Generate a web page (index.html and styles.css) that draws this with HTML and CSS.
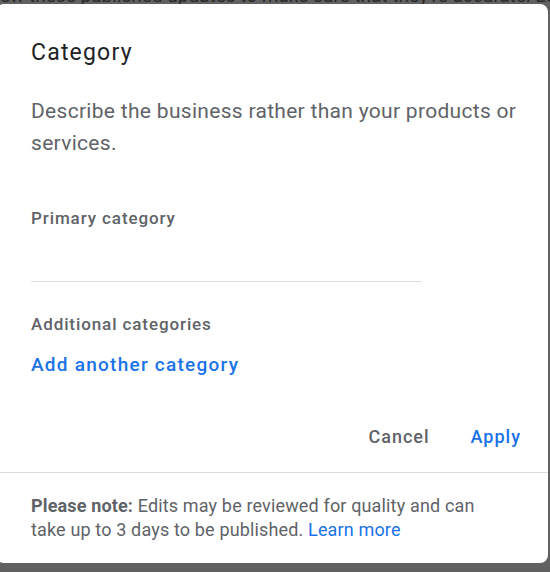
FILE: index.html
```html
<!DOCTYPE html>
<html>
<head>
<meta charset="utf-8">
<link rel="stylesheet" href="styles.css">
</head>
<body>
<div class="backdrop-strip"><div class="backdrop-text">ew these published updates to make sure that they're accurate. Learn</div></div>
<div class="dialog">
  <div class="dialog-body">
    <h1 class="title">Category</h1>
    <p class="desc">Describe the business rather than your products or services.</p>
    <div class="label primary-label">Primary category</div>
    <div class="field"></div>
    <div class="label additional-label">Additional categories</div>
    <a class="add-link">Add another category</a>
    <div class="actions">
      <span class="btn btn-cancel">Cancel</span>
      <span class="btn btn-apply">Apply</span>
    </div>
  </div>
  <div class="note">
    <p class="note-text"><b>Please note:</b> Edits may be reviewed for quality and can take up to 3 days to be published. <a class="learn">Learn more</a></p>
  </div>
</div>
</body>
</html>
```
FILE: styles.css
```css
html, body {
  margin: 0;
  padding: 0;
  height: 100%;
  overflow: hidden;
}
body {
  background: #616161;
  font-family: Roboto, "Liberation Sans", sans-serif;
}
.backdrop-strip {
  height: 4px;
  overflow: hidden;
}
.backdrop-text {
  margin-top: -14px;
  margin-left: 0;
  font-size: 19px;
  line-height: 20px;
  color: #2a2a2a;
  white-space: nowrap;
}
.dialog {
  margin-left: -4px;
  width: 552px;
  height: 559px;
  background: #fff;
  border-radius: 8px;
  display: flex;
  flex-direction: column;
}
.dialog-body {
  padding: 35px 27px 0 35px;
  display: flex;
  flex-direction: column;
  border-bottom: 1px solid #dadce0;
}
.title {
  margin: 0;
  font-size: 23px;
  line-height: 28px;
  font-weight: 400;
  color: #202124;
  letter-spacing: 1.2px;
}
.desc {
  margin: 28px 0 0;
  font-size: 21px;
  line-height: 32px;
  color: #5f6368;
  letter-spacing: 0.3px;
  max-width: 490px;
}
.label {
  font-size: 17px;
  line-height: 24px;
  font-weight: 500;
  color: #5f6368;
  letter-spacing: 0.9px;
}
.primary-label {
  margin-top: 47px;
}
.field {
  width: 391px;
  height: 51px;
  border-bottom: 1px solid #dadce0;
}
.additional-label {
  margin-top: 30px;
}
.add-link {
  margin-top: 17px;
  font-size: 19px;
  line-height: 24px;
  font-weight: 500;
  color: #1a73e8;
  letter-spacing: 1.25px;
  align-self: flex-start;
}
.actions {
  margin-top: 48px;
  margin-bottom: 23px;
  display: flex;
  justify-content: flex-end;
  gap: 41px;
}
.btn {
  font-size: 18px;
  line-height: 24px;
  font-weight: 500;
  letter-spacing: 1px;
}
.btn-cancel { color: #5f6368; }
.btn-apply { color: #1a73e8; }
.note {
  padding: 21px 27px 0 35px;
}
.note-text {
  margin: 0;
  font-size: 18px;
  line-height: 23.5px;
  color: #5f6368;
  letter-spacing: 0.15px;
  max-width: 450px;
}
.note-text b {
  font-weight: 700;
}
.learn {
  color: #1a73e8;
}
```
